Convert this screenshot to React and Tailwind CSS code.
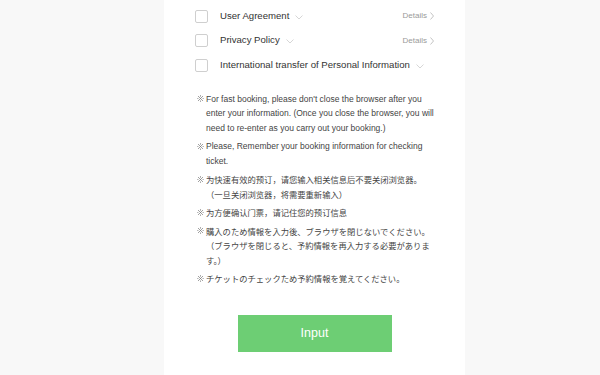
import React from "react";

const font = { fontFamily: '"Liberation Sans", Arial, "Noto Sans CJK SC", sans-serif' };

function ChevronDown() {
  return (
    <svg width="8" height="5" viewBox="0 0 8 5" className="ml-[6px] mt-[2px]">
      <path d="M0.5 0.5 L4 4 L7.5 0.5" fill="none" stroke="#cccccc" strokeWidth="0.8" />
    </svg>
  );
}

function ChevronRight() {
  return (
    <svg width="4" height="8" viewBox="0 0 4 8" className="ml-[3px]">
      <path d="M0.5 0.5 L3.5 4 L0.5 7.5" fill="none" stroke="#b5b5b5" strokeWidth="0.8" />
    </svg>
  );
}

function RefMark() {
  return (
    <svg width="7" height="7" viewBox="0 0 7 7">
      <path d="M1 1 L6 6 M6 1 L1 6" stroke="#777" strokeWidth="0.7" fill="none" />
      <circle cx="3.5" cy="0.9" r="0.55" fill="#777" />
      <circle cx="3.5" cy="6.1" r="0.55" fill="#777" />
      <circle cx="0.9" cy="3.5" r="0.55" fill="#777" />
      <circle cx="6.1" cy="3.5" r="0.55" fill="#777" />
    </svg>
  );
}

function Note({ children, cjk }) {
  return (
    <div className="flex mb-[4px] leading-[14.5px] text-[#444]">
      <span className="w-[9px] h-[14.5px] shrink-0 flex items-center">
        <RefMark />
      </span>
      <div
        className={cjk ? "text-[8.3px] leading-[14.5px]" : "text-[8.5px] leading-[14.5px]"}
        style={cjk ? { fontFamily: cjk } : undefined}
      >
        {children}
      </div>
    </div>
  );
}

function Row({ label, details }) {
  return (
    <div className="flex items-center h-[13px]">
      <div className="w-[13px] h-[13px] border border-[#cfcfcf] rounded-[2px] bg-white shrink-0" />
      <div className="ml-[12px] flex items-center text-[9.6px] text-[#333]">
        <span>{label}</span>
        <ChevronDown />
      </div>
      {details && (
        <div className="ml-auto flex items-center text-[8px] text-[#9a9a9a]">
          <span>Details</span>
          <ChevronRight />
        </div>
      )}
    </div>
  );
}

export default function App() {
  return (
    <div className="w-[600px] h-[375px] bg-[#f8f8f8] flex overflow-hidden" style={font}>
      <div className="w-[164px] shrink-0" />
      <div className="w-[301px] h-full bg-white px-[31px] pt-[9.5px]">
        <div className="flex flex-col gap-[11.5px]">
          <Row label="User Agreement" details />
          <Row label="Privacy Policy" details />
          <Row label="International transfer of Personal Information" />
        </div>
        <div className="mt-[20px] pl-[2px]">
          <Note>
            For fast booking, please don't close the browser after you enter your information. (Once you close the browser, you will need to re-enter as you carry out your booking.)
          </Note>
          <Note>Please, Remember your booking information for checking ticket.</Note>
          <Note cjk='"Noto Sans CJK SC", sans-serif'>
            为快速有效的预订，请您输入相关信息后不要关闭浏览器。
            <br />
            （一旦关闭浏览器，将需要重新输入）
          </Note>
          <Note cjk='"Noto Sans CJK SC", sans-serif'>为方便确认门票，请记住您的预订信息</Note>
          <Note cjk='"Noto Sans CJK JP", sans-serif'>
            購入のため情報を入力後、ブラウザを閉じないでください。
            <br />
            （ブラウザを閉じると、予約情報を再入力する必要があります。）
          </Note>
          <Note cjk='"Noto Sans CJK JP", sans-serif'>チケットのチェックため予約情報を覚えてください。</Note>
        </div>
        <div className="flex justify-center mt-[29px]">
          <button className="w-[154px] h-[37px] bg-[#6dce74] text-white text-[12.5px]">Input</button>
        </div>
      </div>
    </div>
  );
}
